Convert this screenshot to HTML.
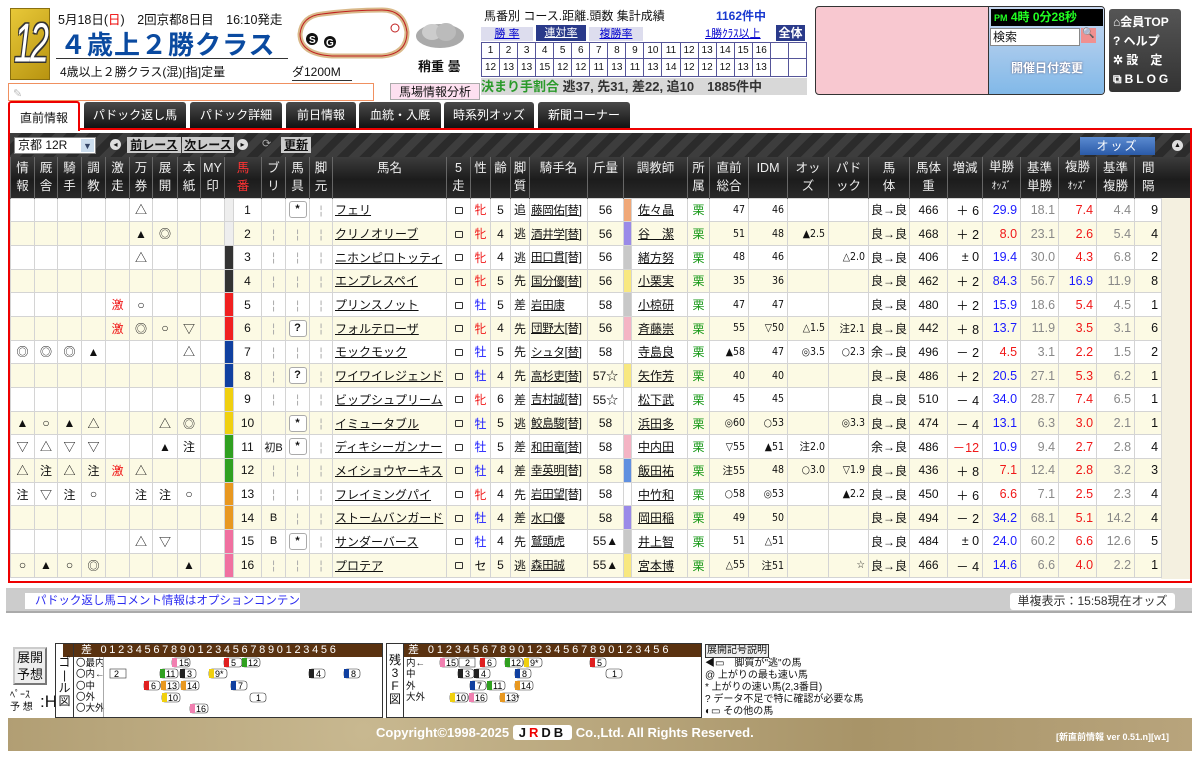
<!DOCTYPE html>
<html><head><meta charset="utf-8">
<style>
*{box-sizing:border-box}
body{margin:0;width:1200px;height:759px;overflow:hidden;background:#fff;font-family:"Liberation Sans","Noto Sans CJK JP",sans-serif;position:relative;color:#111}
.a{position:absolute}
.badge{left:10px;top:8px;width:40px;height:72px;background:linear-gradient(135deg,#e8c838,#b89410);border:1px solid #8a7010;overflow:hidden}
.badge span{display:block;color:#fff;font-size:34px;text-align:center;line-height:70px;letter-spacing:-3px;transform:scaleY(1.6);font-style:italic;text-shadow:1px 1px 0 #333,-1px -1px 0 #333,1px -1px 0 #333,-1px 1px 0 #333}
.tab{position:absolute;top:102px;height:27px;background:linear-gradient(#4a4a4a,#111);color:#fff;font-size:12px;text-align:center;line-height:26px;border-radius:3px 3px 0 0}
table.m{position:absolute;left:10px;top:157px;border-collapse:collapse;table-layout:fixed;width:1151px}
table.m th{background:linear-gradient(#3c3c3c,#1c1c1c 55%,#2a2a2a);color:#eee;font-weight:normal;font-size:12.5px;line-height:18px;border-left:1px solid #666;padding:0;height:41px;vertical-align:middle}
table.m td{border:1px solid #d4d4d4;padding:0;text-align:center;font-size:12px;white-space:nowrap;overflow:hidden}
table.m tr.b{height:23.7px}
tr.y td{background:#fcfae4}
td.n{font-size:17px}
td.nm{text-align:left!important;padding-left:2px!important}
td.nm span{text-decoration:underline;display:inline-block;width:104px}
td.j{text-align:left!important;padding-left:1px!important;font-size:11.5px!important;letter-spacing:-0.3px}
td.r{text-align:right!important;padding-right:3px!important;font-size:12.5px!important}
td.sm{font-size:10.5px!important;text-align:right!important;padding-right:3px!important;font-family:"DejaVu Sans Condensed","Liberation Sans Narrow",sans-serif}
.bl{color:#1a1aff}.rd{color:#f01818}.gr{color:#888}.gn{color:#1a9a1a}
.d{color:#aaa;font-size:11px}
.q{display:inline-block;width:18px;height:17px;border:1px solid #aaa;border-radius:3px;background:#fff;font-size:11px;line-height:15px;font-weight:bold}
.w{display:inline-block;width:8px;height:7px;border:1.5px solid #333;border-radius:1px;position:relative;top:0px}
td.t{text-align:left!important;padding-left:6px!important}
td.t span{text-decoration:underline}
</style></head><body>

<!-- header -->
<div class="a badge"><span>12</span></div>
<div class="a" style="left:58px;top:9px;font-size:12.5px">5月18日(<span style="color:#e00">日</span>)　2回京都8日目　16:10発走</div>
<div class="a" style="left:60px;top:25px;font-size:26px;font-weight:bold;color:#0a4aa0;letter-spacing:1px">４歳上２勝クラス</div>
<div class="a" style="left:56px;top:58px;width:232px;border-top:1px solid #333"></div>
<div class="a" style="left:60px;top:63px;font-size:12px">4歳以上２勝クラス(混)[指]定量</div>
<svg class="a" style="left:292px;top:4px" width="120" height="62"><path d="M30 10 Q10 12 8 30 Q8 50 40 52 L90 52 Q115 50 115 28 Q112 6 90 6 Q60 6 30 10Z" fill="none" stroke="#d9b98a" stroke-width="5"/><path d="M30 10 Q10 12 8 30 Q8 50 40 52 L90 52 Q115 50 115 28 Q112 6 90 6 Q60 6 30 10Z" fill="none" stroke="#c02020" stroke-width="1"/><circle cx="20" cy="35" r="6" fill="#111"/><text x="17" y="39" font-size="10" fill="#fff" font-weight="bold">S</text><circle cx="38" cy="38" r="6" fill="#111"/><text x="34" y="42" font-size="10" fill="#fff" font-weight="bold">G</text><circle cx="103" cy="24" r="4" fill="none" stroke="#c02020"/></svg>
<div class="a" style="left:292px;top:63px;font-size:12px;border-bottom:1px solid #333;width:60px">ダ1200M</div>
<svg class="a" style="left:414px;top:20px" width="52" height="30"><ellipse cx="26" cy="16" rx="24" ry="12" fill="#aaa"/><ellipse cx="18" cy="12" rx="10" ry="8" fill="#ccc"/><ellipse cx="32" cy="12" rx="10" ry="9" fill="#bbb"/></svg>
<div class="a" style="left:418px;top:56px;font-size:13px;font-weight:bold">稍重 曇</div>
<div class="a" style="left:8px;top:83px;width:366px;height:18px;border:1px solid #f09060"><span style="color:#bbb;font-size:11px;margin-left:4px">✎</span></div>
<div class="a" style="left:390px;top:83px;width:90px;height:17px;background:#fde0f0;border:1px solid #aaa;font-size:12px;text-align:center;line-height:16px">馬場情報分析</div>

<div class="a" style="left:484px;top:7px;font-size:12px">馬番別 コース.距離.頭数 集計成績</div>
<div class="a" style="left:716px;top:7px;font-size:12px;color:#1a3ad0;font-weight:bold">1162件中</div>
<div class="a" style="left:481px;top:27px;width:52px;height:14px;background:#dde;font-size:11px;text-align:center;color:#00c;text-decoration:underline;line-height:14px">勝 率</div>
<div class="a" style="left:536px;top:25px;width:50px;height:16px;background:#2a3a8a;font-size:11px;text-align:center;color:#fff;text-decoration:underline;line-height:16px">連対率</div>
<div class="a" style="left:589px;top:27px;width:54px;height:14px;background:#dde;font-size:11px;text-align:center;color:#00c;text-decoration:underline;line-height:14px">複勝率</div>
<div class="a" style="left:705px;top:25px;font-size:11px;color:#00c;text-decoration:underline">1勝ｸﾗｽ以上</div>
<div class="a" style="left:776px;top:25px;width:29px;height:16px;background:#2a3a8a;color:#fff;font-size:12px;text-align:center;line-height:16px;font-weight:bold">全体</div>
<table class="a" style="left:481px;top:42px;border-collapse:collapse;font-size:10px;width:326px;table-layout:fixed">
<tr style="height:16px"><td style="border:1px solid #559;text-align:center">1</td><td style="border:1px solid #559;text-align:center">2</td><td style="border:1px solid #559;text-align:center">3</td><td style="border:1px solid #559;text-align:center">4</td><td style="border:1px solid #559;text-align:center">5</td><td style="border:1px solid #559;text-align:center">6</td><td style="border:1px solid #559;text-align:center">7</td><td style="border:1px solid #559;text-align:center">8</td><td style="border:1px solid #559;text-align:center">9</td><td style="border:1px solid #559;text-align:center">10</td><td style="border:1px solid #559;text-align:center">11</td><td style="border:1px solid #559;text-align:center">12</td><td style="border:1px solid #559;text-align:center">13</td><td style="border:1px solid #559;text-align:center">14</td><td style="border:1px solid #559;text-align:center">15</td><td style="border:1px solid #559;text-align:center">16</td><td style="border:1px solid #559"></td><td style="border:1px solid #559"></td></tr>
<tr style="height:18px"><td style="border:1px solid #559;text-align:center">12</td><td style="border:1px solid #559;text-align:center">13</td><td style="border:1px solid #559;text-align:center">13</td><td style="border:1px solid #559;text-align:center">15</td><td style="border:1px solid #559;text-align:center">12</td><td style="border:1px solid #559;text-align:center">12</td><td style="border:1px solid #559;text-align:center">11</td><td style="border:1px solid #559;text-align:center">13</td><td style="border:1px solid #559;text-align:center">11</td><td style="border:1px solid #559;text-align:center">13</td><td style="border:1px solid #559;text-align:center">14</td><td style="border:1px solid #559;text-align:center">12</td><td style="border:1px solid #559;text-align:center">12</td><td style="border:1px solid #559;text-align:center">12</td><td style="border:1px solid #559;text-align:center">13</td><td style="border:1px solid #559;text-align:center">13</td><td style="border:1px solid #559"></td><td style="border:1px solid #559"></td></tr></table>
<div class="a" style="left:481px;top:78px;width:326px;height:17px;background:#d8d8d8;font-size:13px;line-height:17px;font-weight:bold;color:#333"><span style="color:#2a9a2a">決まり手割合</span> 逃37, 先31, 差22, 追10　1885件中</div>

<div class="a" style="left:815px;top:6px;width:290px;height:89px;border:1px solid #333;border-radius:4px;background:#f8c8d0;overflow:hidden">
 <div class="a" style="left:172px;top:0;width:118px;height:89px;background:linear-gradient(#c8d8f0,#80b8e8);border-left:1px solid #333"></div>
 <div class="a" style="left:175px;top:2px;width:112px;height:17px;background:#000;color:#2f2;font-size:12px;font-weight:bold;line-height:17px;padding-left:3px"><span style="font-size:9px">PM</span> 4時 0分28秒</div>
 <div class="a" style="left:174px;top:21px;width:90px;height:18px;background:#fff;border:1px solid #888;font-size:12px;line-height:16px;padding-left:2px">検索</div>
 <div class="a" style="left:265px;top:21px;width:15px;height:15px;background:#f09090;color:#fff;font-size:10px;text-align:center">🔍</div>
 <div class="a" style="left:172px;top:52px;width:118px;text-align:center;color:#fff;font-size:12px;font-weight:bold;text-shadow:0 0 2px #557">開催日付変更</div>
</div>
<div class="a" style="left:1109px;top:9px;width:72px;height:83px;background:linear-gradient(#555,#333);border-radius:3px;color:#fff;font-size:12px;font-weight:bold;line-height:19px;padding:4px 0 0 4px">
 <div>⌂会員TOP</div><div>? ヘルプ</div><div>✲ 設　定</div><div style="letter-spacing:3px">⧉BLOG</div></div>

<!-- tabs -->
<div class="tab" style="left:84px;width:102px">パドック返し馬</div>
<div class="tab" style="left:190px;width:92px">パドック詳細</div>
<div class="tab" style="left:286px;width:70px">前日情報</div>
<div class="tab" style="left:359px;width:82px">血統・入厩</div>
<div class="tab" style="left:444px;width:90px">時系列オッズ</div>
<div class="tab" style="left:538px;width:92px">新聞コーナー</div>
<div class="a" style="left:8px;top:128px;width:1184px;height:455px;border:2px solid #e00"></div>
<div class="a" style="left:8px;top:101px;width:72px;height:30px;border:2px solid #e00;border-bottom:none;background:#fff;font-size:12px;text-align:center;line-height:30px;border-radius:3px 3px 0 0">直前情報</div>

<!-- toolbar -->
<div class="a" style="left:10px;top:133px;width:1180px;height:24px;background:repeating-linear-gradient(135deg,#3d3d3d 0 8px,#2b2b2b 8px 16px)"></div>
<div class="a" style="left:14px;top:137px;width:82px;height:17px;background:#fff;border:1px solid #888;font-size:12px;line-height:15px;padding-left:3px">京都 12R<span style="position:absolute;right:1px;top:1px;width:13px;height:13px;background:#cde;color:#346;font-size:9px;text-align:center">▼</span></div>
<div class="a" style="left:110px;top:139px;width:11px;height:11px;border-radius:50%;background:#ddd;font-size:8px;text-align:center;line-height:11px">◂</div>
<div class="a" style="left:127px;top:137px;width:54px;height:16px;background:#ccc;font-size:12px;text-align:center;line-height:16px;text-decoration:underline;font-weight:bold">前レース</div>
<div class="a" style="left:182px;top:137px;width:52px;height:16px;background:#ccc;font-size:12px;text-align:center;line-height:16px;text-decoration:underline;font-weight:bold">次レース</div>
<div class="a" style="left:237px;top:139px;width:11px;height:11px;border-radius:50%;background:#ddd;font-size:8px;text-align:center;line-height:11px">▸</div>
<div class="a" style="left:262px;top:137px;color:#aaa;font-size:11px">⟳</div>
<div class="a" style="left:281px;top:137px;width:30px;height:16px;background:#ccc;font-size:12px;text-align:center;line-height:16px;text-decoration:underline;font-weight:bold">更新</div>
<div class="a" style="left:1080px;top:137px;width:75px;height:18px;background:linear-gradient(#5a8ad0,#2a5aa8);color:#fff;font-size:12px;text-align:center;line-height:18px;letter-spacing:2px">オッズ</div>
<div class="a" style="left:1172px;top:140px;width:11px;height:11px;border-radius:50%;background:#ddd;font-size:7px;text-align:center;line-height:11px">▲</div>
<div class="a" style="left:1161px;top:157px;width:29px;height:41px;background:linear-gradient(#3c3c3c,#1c1c1c 55%,#2a2a2a)"></div>
<div class="a" style="left:1161px;top:198px;width:29px;height:381px;background:#f4f0e0"></div>

<table class="m">
<colgroup><col style="width:24px"><col style="width:23px"><col style="width:24px"><col style="width:24px"><col style="width:24px"><col style="width:23px"><col style="width:25px"><col style="width:23px"><col style="width:24px"><col style="width:9px"><col style="width:28px"><col style="width:24px"><col style="width:24px"><col style="width:23px"><col style="width:114px"><col style="width:24px"><col style="width:20px"><col style="width:20px"><col style="width:19px"><col style="width:58px"><col style="width:36px"><col style="width:8px"><col style="width:56px"><col style="width:22px"><col style="width:39px"><col style="width:39px"><col style="width:41px"><col style="width:40px"><col style="width:41px"><col style="width:38px"><col style="width:35px"><col style="width:38px"><col style="width:38px"><col style="width:38px"><col style="width:38px"><col style="width:27px"></colgroup>
<tr><th>情<br>報</th><th>厩<br>舎</th><th>騎<br>手</th><th>調<br>教</th><th>激<br>走</th><th>万<br>券</th><th>展<br>開</th><th>本<br>紙</th><th>MY<br>印</th><th colspan="2" style="color:#f33">馬<br>番</th><th>ブ<br>リ</th><th>馬<br>具</th><th>脚<br>元</th><th>馬名<br>&nbsp;</th><th>5<br>走</th><th>性<br>&nbsp;</th><th>齢<br>&nbsp;</th><th>脚<br>質</th><th>騎手名<br>&nbsp;</th><th>斤量<br>&nbsp;</th><th colspan="2">調教師<br>&nbsp;</th><th>所<br>属</th><th>直前<br>総合</th><th>IDM<br>&nbsp;</th><th>オッ<br>ズ</th><th>パド<br>ック</th><th>馬<br>体</th><th>馬体<br>重</th><th>増減<br>&nbsp;</th><th>単勝<br><span style="font-size:10px">ｵｯｽﾞ</span></th><th>基準<br>単勝</th><th>複勝<br><span style="font-size:10px">ｵｯｽﾞ</span></th><th>基準<br>複勝</th><th>間<br>隔</th></tr>

<tr class="b"><td></td><td></td><td></td><td></td><td></td><td>△</td><td></td><td></td><td></td><td style="background:#eee"></td><td class="n">1</td><td></td><td><span class="q">*</span></td><td class="d">¦</td><td class="nm"><span>フェリ</span></td><td><i class="w"></i></td><td class="rd">牝</td><td>5</td><td>追</td><td class="j"><u>藤岡佑[替]</u></td><td>56</td><td style="background:#f0a878"></td><td class="t"><span>佐々晶</span></td><td class="gn">栗</td><td class="sm">47</td><td class="sm">46</td><td></td><td></td><td>良→良</td><td>466</td><td class="r">＋ 6</td><td class="r bl">29.9</td><td class="r gr">18.1</td><td class="r rd">7.4</td><td class="r gr">4.4</td><td class="r">9</td></tr>
<tr class="b y"><td></td><td></td><td></td><td></td><td></td><td>▲</td><td>◎</td><td></td><td></td><td style="background:#eee"></td><td class="n">2</td><td class="d">¦</td><td class="d">¦</td><td class="d">¦</td><td class="nm"><span>クリノオリーブ</span></td><td><i class="w"></i></td><td class="rd">牝</td><td>4</td><td>逃</td><td class="j"><u>酒井学[替]</u></td><td>56</td><td style="background:#9a8ae8"></td><td class="t"><span>谷　潔</span></td><td class="gn">栗</td><td class="sm">51</td><td class="sm">48</td><td class="sm">▲2.5</td><td></td><td>良→良</td><td>468</td><td class="r">＋ 2</td><td class="r rd">8.0</td><td class="r gr">23.1</td><td class="r rd">2.6</td><td class="r gr">5.4</td><td class="r">4</td></tr>
<tr class="b"><td></td><td></td><td></td><td></td><td></td><td>△</td><td></td><td></td><td></td><td style="background:#333"></td><td class="n">3</td><td class="d">¦</td><td class="d">¦</td><td class="d">¦</td><td class="nm"><span>ニホンピロトッティ</span></td><td><i class="w"></i></td><td class="rd">牝</td><td>4</td><td>逃</td><td class="j"><u>田口貫[替]</u></td><td>56</td><td style="background:#c8c8c8"></td><td class="t"><span>緒方努</span></td><td class="gn">栗</td><td class="sm">48</td><td class="sm">46</td><td></td><td class="sm">△2.0</td><td>良→良</td><td>406</td><td class="r">± 0</td><td class="r bl">19.4</td><td class="r gr">30.0</td><td class="r rd">4.3</td><td class="r gr">6.8</td><td class="r">2</td></tr>
<tr class="b y"><td></td><td></td><td></td><td></td><td></td><td></td><td></td><td></td><td></td><td style="background:#333"></td><td class="n">4</td><td class="d">¦</td><td class="d">¦</td><td class="d">¦</td><td class="nm"><span>エンプレスペイ</span></td><td><i class="w"></i></td><td class="rd">牝</td><td>5</td><td>先</td><td class="j"><u>国分優[替]</u></td><td>56</td><td style="background:#f8e880"></td><td class="t"><span>小栗実</span></td><td class="gn">栗</td><td class="sm">35</td><td class="sm">36</td><td></td><td></td><td>良→良</td><td>462</td><td class="r">＋ 2</td><td class="r bl">84.3</td><td class="r gr">56.7</td><td class="r bl">16.9</td><td class="r gr">11.9</td><td class="r">8</td></tr>
<tr class="b"><td></td><td></td><td></td><td></td><td class="rd">激</td><td>○</td><td></td><td></td><td></td><td style="background:#f02020"></td><td class="n">5</td><td class="d">¦</td><td class="d">¦</td><td class="d">¦</td><td class="nm"><span>プリンスノット</span></td><td><i class="w"></i></td><td class="bl">牡</td><td>5</td><td>差</td><td class="j"><u>岩田康</u></td><td>58</td><td style="background:#c8c8c8"></td><td class="t"><span>小椋研</span></td><td class="gn">栗</td><td class="sm">47</td><td class="sm">47</td><td></td><td></td><td>良→良</td><td>480</td><td class="r">＋ 2</td><td class="r bl">15.9</td><td class="r gr">18.6</td><td class="r rd">5.4</td><td class="r gr">4.5</td><td class="r">1</td></tr>
<tr class="b y"><td></td><td></td><td></td><td></td><td class="rd">激</td><td>◎</td><td>○</td><td>▽</td><td></td><td style="background:#f02020"></td><td class="n">6</td><td class="d">¦</td><td><span class="q">?</span></td><td class="d">¦</td><td class="nm"><span>フォルテローザ</span></td><td><i class="w"></i></td><td class="rd">牝</td><td>4</td><td>先</td><td class="j"><u>団野大[替]</u></td><td>56</td><td style="background:#f4b4c4"></td><td class="t"><span>斉藤崇</span></td><td class="gn">栗</td><td class="sm">55</td><td class="sm">▽50</td><td class="sm">△1.5</td><td class="sm">注2.1</td><td>良→良</td><td>442</td><td class="r">＋ 8</td><td class="r bl">13.7</td><td class="r gr">11.9</td><td class="r rd">3.5</td><td class="r gr">3.1</td><td class="r">6</td></tr>
<tr class="b"><td>◎</td><td>◎</td><td>◎</td><td>▲</td><td></td><td></td><td></td><td>△</td><td></td><td style="background:#1040a0"></td><td class="n">7</td><td class="d">¦</td><td class="d">¦</td><td class="d">¦</td><td class="nm"><span>モックモック</span></td><td><i class="w"></i></td><td class="bl">牡</td><td>5</td><td>先</td><td class="j"><u>シュタ[替]</u></td><td>58</td><td></td><td class="t"><span>寺島良</span></td><td class="gn">栗</td><td class="sm">▲58</td><td class="sm">47</td><td class="sm">◎3.5</td><td class="sm">○2.3</td><td>余→良</td><td>496</td><td class="r">－ 2</td><td class="r rd">4.5</td><td class="r gr">3.1</td><td class="r rd">2.2</td><td class="r gr">1.5</td><td class="r">2</td></tr>
<tr class="b y"><td></td><td></td><td></td><td></td><td></td><td></td><td></td><td></td><td></td><td style="background:#1040a0"></td><td class="n">8</td><td class="d">¦</td><td><span class="q">?</span></td><td class="d">¦</td><td class="nm"><span>ワイワイレジェンド</span></td><td><i class="w"></i></td><td class="bl">牡</td><td>4</td><td>先</td><td class="j"><u>高杉吏[替]</u></td><td>57☆</td><td style="background:#f8e880"></td><td class="t"><span>矢作芳</span></td><td class="gn">栗</td><td class="sm">40</td><td class="sm">40</td><td></td><td></td><td>良→良</td><td>486</td><td class="r">＋ 2</td><td class="r bl">20.5</td><td class="r gr">27.1</td><td class="r rd">5.3</td><td class="r gr">6.2</td><td class="r">1</td></tr>
<tr class="b"><td></td><td></td><td></td><td></td><td></td><td></td><td></td><td></td><td></td><td style="background:#f0d010"></td><td class="n">9</td><td class="d">¦</td><td class="d">¦</td><td class="d">¦</td><td class="nm"><span>ビップシュプリーム</span></td><td><i class="w"></i></td><td class="rd">牝</td><td>6</td><td>差</td><td class="j"><u>吉村誠[替]</u></td><td>55☆</td><td></td><td class="t"><span>松下武</span></td><td class="gn">栗</td><td class="sm">45</td><td class="sm">45</td><td></td><td></td><td>良→良</td><td>510</td><td class="r">－ 4</td><td class="r bl">34.0</td><td class="r gr">28.7</td><td class="r rd">7.4</td><td class="r gr">6.5</td><td class="r">1</td></tr>
<tr class="b y"><td>▲</td><td>○</td><td>▲</td><td>△</td><td></td><td></td><td>△</td><td>◎</td><td></td><td style="background:#f0d010"></td><td class="n">10</td><td></td><td><span class="q">*</span></td><td class="d">¦</td><td class="nm"><span>イミュータブル</span></td><td><i class="w"></i></td><td class="bl">牡</td><td>5</td><td>逃</td><td class="j"><u>鮫島駿[替]</u></td><td>58</td><td></td><td class="t"><span>浜田多</span></td><td class="gn">栗</td><td class="sm">◎60</td><td class="sm">○53</td><td></td><td class="sm">◎3.3</td><td>良→良</td><td>474</td><td class="r">－ 4</td><td class="r bl">13.1</td><td class="r gr">6.3</td><td class="r rd">3.0</td><td class="r gr">2.1</td><td class="r">1</td></tr>
<tr class="b"><td>▽</td><td>△</td><td>▽</td><td>▽</td><td></td><td></td><td>▲</td><td>注</td><td></td><td style="background:#30a020"></td><td class="n">11</td><td style="font-size:11px">初B</td><td><span class="q">*</span></td><td class="d">¦</td><td class="nm"><span>ディキシーガンナー</span></td><td><i class="w"></i></td><td class="bl">牡</td><td>5</td><td>差</td><td class="j"><u>和田竜[替]</u></td><td>58</td><td style="background:#f4b4c4"></td><td class="t"><span>中内田</span></td><td class="gn">栗</td><td class="sm">▽55</td><td class="sm">▲51</td><td class="sm">注2.0</td><td></td><td>余→良</td><td>486</td><td class="r rd">－12</td><td class="r bl">10.9</td><td class="r gr">9.4</td><td class="r rd">2.7</td><td class="r gr">2.8</td><td class="r">4</td></tr>
<tr class="b y"><td>△</td><td>注</td><td>△</td><td>注</td><td class="rd">激</td><td>△</td><td></td><td></td><td></td><td style="background:#30a020"></td><td class="n">12</td><td class="d">¦</td><td class="d">¦</td><td class="d">¦</td><td class="nm"><span>メイショウヤーキス</span></td><td><i class="w"></i></td><td class="bl">牡</td><td>4</td><td>差</td><td class="j"><u>幸英明[替]</u></td><td>58</td><td style="background:#6090e0"></td><td class="t"><span>飯田祐</span></td><td class="gn">栗</td><td class="sm">注55</td><td class="sm">48</td><td class="sm">○3.0</td><td class="sm">▽1.9</td><td>良→良</td><td>436</td><td class="r">＋ 8</td><td class="r rd">7.1</td><td class="r gr">12.4</td><td class="r rd">2.8</td><td class="r gr">3.2</td><td class="r">3</td></tr>
<tr class="b"><td>注</td><td>▽</td><td>注</td><td>○</td><td></td><td>注</td><td>注</td><td>○</td><td></td><td style="background:#e89820"></td><td class="n">13</td><td class="d">¦</td><td class="d">¦</td><td class="d">¦</td><td class="nm"><span>フレイミングパイ</span></td><td><i class="w"></i></td><td class="rd">牝</td><td>4</td><td>先</td><td class="j"><u>岩田望[替]</u></td><td>58</td><td></td><td class="t"><span>中竹和</span></td><td class="gn">栗</td><td class="sm">○58</td><td class="sm">◎53</td><td></td><td class="sm">▲2.2</td><td>良→良</td><td>450</td><td class="r">＋ 6</td><td class="r rd">6.6</td><td class="r gr">7.1</td><td class="r rd">2.5</td><td class="r gr">2.3</td><td class="r">4</td></tr>
<tr class="b y"><td></td><td></td><td></td><td></td><td></td><td></td><td></td><td></td><td></td><td style="background:#e89820"></td><td class="n">14</td><td style="font-size:11px">B</td><td class="d">¦</td><td class="d">¦</td><td class="nm"><span>ストームバンガード</span></td><td><i class="w"></i></td><td class="bl">牡</td><td>4</td><td>差</td><td class="j"><u>水口優</u></td><td>58</td><td style="background:#9a8ae8"></td><td class="t"><span>岡田稲</span></td><td class="gn">栗</td><td class="sm">49</td><td class="sm">50</td><td></td><td></td><td>良→良</td><td>494</td><td class="r">－ 2</td><td class="r bl">34.2</td><td class="r gr">68.1</td><td class="r rd">5.1</td><td class="r gr">14.2</td><td class="r">4</td></tr>
<tr class="b"><td></td><td></td><td></td><td></td><td></td><td>△</td><td>▽</td><td></td><td></td><td style="background:#f070a0"></td><td class="n">15</td><td style="font-size:11px">B</td><td><span class="q">*</span></td><td class="d">¦</td><td class="nm"><span>サンダーバース</span></td><td><i class="w"></i></td><td class="bl">牡</td><td>4</td><td>先</td><td class="j"><u>鷲頭虎</u></td><td>55▲</td><td style="background:#c8c8c8"></td><td class="t"><span>井上智</span></td><td class="gn">栗</td><td class="sm">51</td><td class="sm">△51</td><td></td><td></td><td>良→良</td><td>484</td><td class="r">± 0</td><td class="r bl">24.0</td><td class="r gr">60.2</td><td class="r rd">6.6</td><td class="r gr">12.6</td><td class="r">5</td></tr>
<tr class="b y"><td>○</td><td>▲</td><td>○</td><td>◎</td><td></td><td></td><td></td><td>▲</td><td></td><td style="background:#f070a0"></td><td class="n">16</td><td class="d">¦</td><td class="d">¦</td><td class="d">¦</td><td class="nm"><span>プロテア</span></td><td><i class="w"></i></td><td>セ</td><td>5</td><td>逃</td><td class="j"><u>森田誠</u></td><td>55▲</td><td style="background:#f8e880"></td><td class="t"><span>宮本博</span></td><td class="gn">栗</td><td class="sm">△55</td><td class="sm">注51</td><td></td><td class="sm">☆</td><td>良→良</td><td>466</td><td class="r">－ 4</td><td class="r bl">14.6</td><td class="r gr">6.6</td><td class="r rd">4.0</td><td class="r gr">2.2</td><td class="r">1</td></tr>
</table>

<!-- status bar -->
<div class="a" style="left:6px;top:588px;width:1186px;height:25px;background:#ccc;border-bottom:2px solid #aaa"></div>
<div class="a" style="left:25px;top:593px;width:275px;height:16px;background:#fff;color:#2a2af0;font-size:11.5px;line-height:16px;padding-left:10px;white-space:nowrap;overflow:hidden">パドック返し馬コメント情報はオプションコンテンツです。</div>
<div class="a" style="left:1010px;top:593px;width:165px;height:17px;background:#fff;border-radius:3px;font-size:12px;line-height:17px;text-align:center;color:#333">単複表示：15:58現在オッズ</div>

<!-- bottom diagrams -->
<div class="a" style="left:13px;top:647px;width:34px;height:38px;border:2px outset #ccc;background:#eee;font-size:13px;line-height:17px;text-align:center">展開<br>予想</div>
<div class="a" style="left:10px;top:690px;font-size:10px;line-height:12px">ﾍﾟｰｽ<br>予 想</div>
<div class="a" style="left:40px;top:692px;font-size:17px">:H</div>
<div class="a" style="left:55px;top:643px;width:328px;height:75px;border:1px solid #333"></div>
<div class="a" style="left:63px;top:644px;width:319px;height:13px;background:#5a3210;color:#fff;font-size:11px;line-height:13px;letter-spacing:2.7px;padding-left:18px;white-space:nowrap;overflow:hidden">差 012345678901234567890123456</div>
<div class="a" style="left:56px;top:644px;width:18px;height:73px;border-right:1px solid #333;font-size:12px;line-height:13px;text-align:center;padding-top:12px">ゴ<br>|<br>ル<br>図</div>
<div class="a" style="left:76px;top:658px;font-size:9.5px;line-height:11.3px">〇最内<br>〇内←<br>〇中<br>〇外<br>〇大外</div>
<div class="a" style="left:103px;top:657px;width:1px;height:60px;background:#aaa"></div>
<svg class="a" style="left:104px;top:657px" width="278" height="60" font-size="9" font-family="Liberation Sans">
<g><rect x="68" y="1" width="18" height="9" rx="3" fill="#fff" stroke="#333" stroke-width=".6"/><rect x="68" y="1" width="5" height="9" fill="#f080b0"/><text x="75" y="9">15</text></g>
<g><rect x="120" y="1" width="18" height="9" rx="3" fill="#fff" stroke="#333" stroke-width=".6"/><rect x="120" y="1" width="5" height="9" fill="#e02020"/><text x="127" y="9">5</text></g>
<g><rect x="138" y="1" width="18" height="9" rx="3" fill="#fff" stroke="#333" stroke-width=".6"/><rect x="138" y="1" width="5" height="9" fill="#30a020"/><text x="144" y="9">12</text></g>
<g><rect x="6" y="12" width="16" height="9" fill="#fff" stroke="#333" stroke-width=".6"/><text x="10" y="20">2</text></g>
<g><rect x="56" y="12" width="18" height="9" rx="3" fill="#fff" stroke="#333" stroke-width=".6"/><rect x="56" y="12" width="5" height="9" fill="#30a020"/><text x="62" y="20">11</text></g>
<g><rect x="76" y="12" width="16" height="9" rx="3" fill="#fff" stroke="#333" stroke-width=".6"/><rect x="76" y="12" width="5" height="9" fill="#222"/><text x="83" y="20">3</text></g>
<g><rect x="105" y="12" width="18" height="9" rx="3" fill="#fff" stroke="#333" stroke-width=".6"/><rect x="105" y="12" width="5" height="9" fill="#f0d010"/><text x="111" y="20">9*</text></g>
<g><rect x="205" y="12" width="16" height="9" rx="3" fill="#fff" stroke="#333" stroke-width=".6"/><rect x="205" y="12" width="5" height="9" fill="#222"/><text x="212" y="20">4</text></g>
<g><rect x="240" y="12" width="16" height="9" rx="3" fill="#fff" stroke="#333" stroke-width=".6"/><rect x="240" y="12" width="5" height="9" fill="#1040a0"/><text x="247" y="20">8</text></g>
<g><rect x="40" y="24" width="16" height="9" rx="3" fill="#fff" stroke="#333" stroke-width=".6"/><rect x="40" y="24" width="5" height="9" fill="#e02020"/><text x="47" y="32">6</text></g>
<g><rect x="57" y="24" width="18" height="9" rx="3" fill="#fff" stroke="#333" stroke-width=".6"/><rect x="57" y="24" width="5" height="9" fill="#e89820"/><text x="63" y="32">13</text></g>
<g><rect x="77" y="24" width="18" height="9" rx="3" fill="#fff" stroke="#333" stroke-width=".6"/><rect x="77" y="24" width="5" height="9" fill="#e89820"/><text x="83" y="32">14</text></g>
<g><rect x="127" y="24" width="16" height="9" rx="3" fill="#fff" stroke="#333" stroke-width=".6"/><rect x="127" y="24" width="5" height="9" fill="#1040a0"/><text x="134" y="32">7</text></g>
<g><rect x="58" y="36" width="18" height="9" rx="3" fill="#fff" stroke="#333" stroke-width=".6"/><rect x="58" y="36" width="5" height="9" fill="#f0d010"/><text x="64" y="44">10</text></g>
<g><rect x="146" y="36" width="16" height="9" rx="3" fill="#fff" stroke="#333" stroke-width=".6"/><text x="152" y="44">1</text></g>
<g><rect x="86" y="47" width="18" height="9" rx="3" fill="#fff" stroke="#333" stroke-width=".6"/><rect x="86" y="47" width="5" height="9" fill="#f080b0"/><text x="92" y="55">16</text></g>
</svg>

<div class="a" style="left:386px;top:643px;width:316px;height:75px;border:1px solid #333"></div>
<div class="a" style="left:404px;top:644px;width:297px;height:13px;background:#5a3210;color:#fff;font-size:11px;line-height:13px;letter-spacing:2.9px;padding-left:4px;white-space:nowrap;overflow:hidden">差 012345678901234567890123456</div>
<div class="a" style="left:387px;top:644px;width:17px;height:73px;border-right:1px solid #333;font-size:12px;line-height:13px;text-align:center;padding-top:10px">残<br>3<br>F<br>図</div>
<div class="a" style="left:406px;top:658px;font-size:9.5px;line-height:11.3px">内←<br>中<br>外<br>大外</div>
<svg class="a" style="left:430px;top:657px" width="270" height="60" font-size="9" font-family="Liberation Sans">
<g><rect x="10" y="1" width="18" height="9" rx="3" fill="#fff" stroke="#333" stroke-width=".6"/><rect x="10" y="1" width="5" height="9" fill="#f080b0"/><text x="16" y="9">15</text></g>
<g><rect x="29" y="1" width="16" height="9" fill="#fff" stroke="#333" stroke-width=".6"/><text x="35" y="9">2</text></g>
<g><rect x="50" y="1" width="16" height="9" rx="3" fill="#fff" stroke="#333" stroke-width=".6"/><rect x="50" y="1" width="5" height="9" fill="#e02020"/><text x="57" y="9">6</text></g>
<g><rect x="75" y="1" width="18" height="9" rx="3" fill="#fff" stroke="#333" stroke-width=".6"/><rect x="75" y="1" width="5" height="9" fill="#30a020"/><text x="81" y="9">12</text></g>
<g><rect x="94" y="1" width="18" height="9" rx="3" fill="#fff" stroke="#333" stroke-width=".6"/><rect x="94" y="1" width="5" height="9" fill="#f0d010"/><text x="100" y="9">9*</text></g>
<g><rect x="160" y="1" width="16" height="9" rx="3" fill="#fff" stroke="#333" stroke-width=".6"/><rect x="160" y="1" width="5" height="9" fill="#e02020"/><text x="167" y="9">5</text></g>
<g><rect x="28" y="12" width="16" height="9" rx="3" fill="#fff" stroke="#333" stroke-width=".6"/><rect x="28" y="12" width="5" height="9" fill="#222"/><text x="35" y="20">3</text></g>
<g><rect x="44" y="12" width="16" height="9" rx="3" fill="#fff" stroke="#333" stroke-width=".6"/><rect x="44" y="12" width="5" height="9" fill="#222"/><text x="51" y="20">4</text></g>
<g><rect x="85" y="12" width="16" height="9" rx="3" fill="#fff" stroke="#333" stroke-width=".6"/><rect x="85" y="12" width="5" height="9" fill="#1040a0"/><text x="92" y="20">8</text></g>
<g><rect x="176" y="12" width="16" height="9" rx="3" fill="#fff" stroke="#333" stroke-width=".6"/><text x="182" y="20">1</text></g>
<g><rect x="40" y="24" width="16" height="9" rx="3" fill="#fff" stroke="#333" stroke-width=".6"/><rect x="40" y="24" width="5" height="9" fill="#1040a0"/><text x="47" y="32">7</text></g>
<g><rect x="57" y="24" width="18" height="9" rx="3" fill="#fff" stroke="#333" stroke-width=".6"/><rect x="57" y="24" width="5" height="9" fill="#30a020"/><text x="63" y="32">11</text></g>
<g><rect x="85" y="24" width="18" height="9" rx="3" fill="#fff" stroke="#333" stroke-width=".6"/><rect x="85" y="24" width="5" height="9" fill="#e89820"/><text x="91" y="32">14</text></g>
<g><rect x="20" y="36" width="18" height="9" rx="3" fill="#fff" stroke="#333" stroke-width=".6"/><rect x="20" y="36" width="5" height="9" fill="#f0d010"/><text x="26" y="44">10</text></g>
<g><rect x="39" y="36" width="18" height="9" rx="3" fill="#fff" stroke="#333" stroke-width=".6"/><rect x="39" y="36" width="5" height="9" fill="#f080b0"/><text x="45" y="44">16</text></g>
<g><rect x="70" y="36" width="18" height="9" rx="3" fill="#fff" stroke="#333" stroke-width=".6"/><rect x="70" y="36" width="5" height="9" fill="#e89820"/><text x="76" y="44">13*</text></g>
</svg>
<div class="a" style="left:705px;top:644px;font-size:10px;line-height:12px">
<div style="border:1px solid #333;display:inline-block;padding:0 1px;background:#eee">展開記号説明</div>
<div>◀▭　脚質が"逃"の馬</div><div>@ 上がりの最も速い馬</div><div>* 上がりの速い馬(2,3番目)</div><div>? データ不足で特に確認が必要な馬</div><div>◐▭ その他の馬</div></div>

<!-- footer -->
<div class="a" style="left:8px;top:718px;width:1184px;height:33px;background:radial-gradient(circle at 30% 40%,#c8b890,#a89468 60%,#b8a47c);"></div>
<div class="a" style="left:376px;top:724px;font-size:13px;color:#fff;font-weight:bold;line-height:18px;white-space:nowrap">Copyright©1998-2025 <span style="background:#fff;color:#111;padding:0 6px;border-radius:3px;letter-spacing:3px">J<span style="color:#e00">R</span>DB</span> Co.,Ltd. All Rights Reserved.</div>
<div class="a" style="left:1056px;top:730px;font-size:9px;color:#fff;font-weight:bold">[新直前情報 ver 0.51.n][w1]</div>
</body></html>
